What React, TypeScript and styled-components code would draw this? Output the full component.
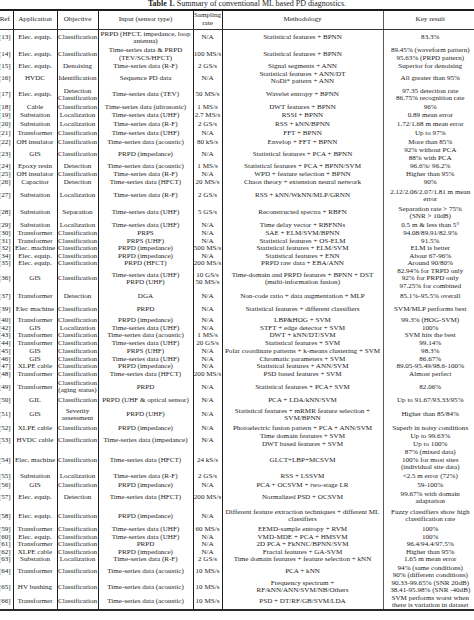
import React from 'react';
import styled, { createGlobalStyle } from 'styled-components';

const GlobalStyle = createGlobalStyle`
  html, body {
    margin: 0;
    padding: 0;
    background: #fff;
  }
  body {
    width: 474px;
    height: 620px;
    overflow: hidden;
  }
`;

const Page = styled.div`
  width: 474px;
  height: 620px;
  overflow: hidden;
  font-family: 'Liberation Serif', 'Times New Roman', serif;
  color: #1c1c1c;
`;

const Caption = styled.div`
  height: 10px;
  margin-top: -1px;
  padding-left: 20px;
  font-size: 8px;
  line-height: 9px;
  text-align: center;
  white-space: nowrap;
`;

const Table = styled.table`
  margin-left: -3px;
  width: 480px;
  table-layout: fixed;
  border-collapse: collapse;
  border-top: 2px solid #1c1c1c;
  border-bottom: 2.5px solid #2a2a2a;
  font-size: 7.1px;
  line-height: 7.4px;
`;

const Col = styled.col<{ $w: number }>`
  width: ${p => p.$w}px;
`;

const HeadRow = styled.tr`
  height: 19.3px;
`;

const Row = styled.tr<{ $h: number }>`
  height: ${p => p.$h}px;
`;

const HeadCell = styled.th<{ $first?: boolean; $soft?: boolean }>`
  padding: 0;
  font-weight: normal;
  vertical-align: middle;
  white-space: nowrap;
  border-bottom: 1px solid #333;
  border-left: ${p => (p.$first ? 'none' : `1px solid ${p.$soft ? '#5a5a5a' : '#1e1e1e'}`)};
`;

const Cell = styled.td<{ $first?: boolean; $soft?: boolean }>`
  padding: 0;
  vertical-align: middle;
  white-space: nowrap;
  border-left: ${p => (p.$first ? 'none' : `1px solid ${p.$soft ? '#5a5a5a' : '#1e1e1e'}`)};
`;

// flex column so that over-wide lines spill out evenly on both sides
const Lines = styled.div`
  display: flex;
  flex-direction: column;
  align-items: center;
`;

interface Entry {
  ref: string;
  app: string[];
  obj: string[];
  input: string[];
  rate: string[];
  meth: string[];
  key: string[];
  h: number;
}

const e = (
  ref: string,
  app: string,
  obj: string,
  input: string,
  rate: string,
  meth: string,
  key: string,
  h: number,
): Entry => ({
  ref,
  app: app.split('|'),
  obj: obj.split('|'),
  input: input.split('|'),
  rate: rate.split('|'),
  meth: meth.split('|'),
  key: key.split('|'),
  h,
});

const rows: Entry[] = [
  e('[13]', 'Elec. equip.', 'Classification', 'PRPD (HFCT, impedance, loop|antenna)', 'N/A', 'Statistical features + BPNN', '83.3%', 17.25),
  e('[14]', 'Elec. equip.', 'Classification', 'Time-series data & PRPD|(TEV/SCS/HFCT)', '100 MS/s', 'Statistical features + BPNN', '89.45% (waveform pattern)|95.63% (PRPD pattern)', 16.23),
  e('[15]', 'Elec. equip.', 'Denoising', 'Time-series data (R-F)', '2 GS/s', 'Signal segments + ANN', 'Superior for denoising', 7.25),
  e('[16]', 'HVDC', 'Identification', 'Sequence PD data', 'N/A', 'Statistical features + ANN/DT|NoDi* pattern + ANN', 'All greater than 95%', 16.62),
  e('[17]', 'Elec. equip.', 'Detection|Classification', 'Time-series data (TEV)', '50 MS/s', 'Wavelet entropy + BPNN', '97.35 detection rate|86.75% recognition rate', 16.63),
  e('[18]', 'Cable', 'Classification', 'Time-series data (ultrasonic)', '1 MS/s', 'DWT features + BPNN', '96%', 8.22),
  e('[19]', 'Substation', 'Localization', 'Time-series data (UHF)', '2.7 MS/s', 'RSSI + BPNN', '0.89 mean error', 8.95),
  e('[20]', 'Substation', 'Localization', 'Time-series data (R-F)', '2 GS/s', 'RSS + kNN/BPNN', '1.72/1.68 m mean error', 8.75),
  e('[21]', 'Transformer', 'Classification', 'Time-series data (UHF)', 'N/A', 'FFT + BPNN', 'Up to 97%', 8.75),
  e('[22]', 'OH insulator', 'Classification', 'Time-series data (acoustic)', '80 kS/s', 'Envelop + FFT + BPNN', 'More than 85%', 8.63),
  e('[23]', 'GIS', 'Classification', 'PRPD (impedance)', 'N/A', 'Statistical features + PCA + BPNN', '92% without PCA|88% with PCA', 16.25),
  e('[24]', 'Epoxy resin', 'Detection', 'Time-series data (acoustic)', '1 MS/s', 'Statistical features + PCA + BPNN/SVM', '96.6%/ 96.2%', 8.02),
  e('[25]', 'OH insulator', 'Classification', 'Time-series data (R-F)', 'N/A', 'WPD + feature selection + BPNN', 'Higher than 95%', 7.6),
  e('[26]', 'Capacitor', 'Detection', 'Time-series data (HFCT)', '20 MS/s', 'Chaos theory + extension neural network', '90%', 8.78),
  e('[27]', 'Substation', 'Localization', 'Time-series data (R-F)', '2 GS/s', 'RSS + kNN/WkNN/MLP/GRNN', '2.12/2.06/2.07/1.81 m mean|error', 17.27),
  e('[28]', 'Substation', 'Separation', 'Time-series data (UHF)', '5 GS/s', 'Reconstructed spectra + RBFN', 'Separation rate > 75%|(SNR > 10dB)', 17.23),
  e('[29]', 'Substation', 'Localization', 'Time-series data (UHF)', 'N/A', 'Time delay vector + RBFNNs', '0.5 m & less than 5°', 8.52),
  e('[30]', 'Transformer', 'Classification', 'PRPS', 'N/A', 'SAE + ELM/SVM/BPNN', '94.08/89.91/82.9%', 7.4),
  e('[31]', 'Transformer', 'Classification', 'PRPS (UHF)', 'N/A', 'Statistical features + OS-ELM', '91.5%', 7.35),
  e('[32]', 'Elec. machine', 'Classification', 'PRPD (impedance)', '500 MS/s', 'Statistical features + ELM/SVM', 'ELM is better', 7.0),
  e('[34]', 'Elec. equip.', 'Classification', 'PRPD (impedance)', 'N/A', 'Statistical features + ENN', 'About 67-96%', 7.0),
  e('[35]', 'Elec. equip.', 'Classification', 'PRPD (HFCT)', '200 MS/s', 'PRPD raw data + EBA/ANN', 'Around 90/80%', 7.65),
  e('[36]', 'GIS', 'Classification', 'Time-series data (UHF)|PRPD (UHF)', '10 GS/s|50 MS/s', 'Time-domain and PRPD features + BPNN + DST|(multi-information fusion)', '82.94% for TRPD only|92% for PRPD only|97.25% for combined', 22.95),
  e('[37]', 'Transformer', 'Detection', 'DGA', 'N/A', 'Non-code ratio + data augmentation + MLP', '85.1%-95.5% overall', 12.6),
  e('[39]', 'Elec machine', 'Classification', 'PRPD', 'N/A', 'Statistical features + different classifiers', 'SVM/MLP performs best', 13.25),
  e('[40]', 'Transformer', 'Classification', 'PRPD (impedance)', 'N/A', 'LBP&HOG + SVM', '99.3% (HOG-SVM)', 8.0),
  e('[42]', 'GIS', 'Localization', 'Time-series data (UHF)', 'N/A', 'STFT + edge detector + SVM', '100%', 7.85),
  e('[43]', 'Transformer', 'Classification', 'Time-series data (acoustic)', '1 MS/s', 'DWT + kNN/DT/SVM', 'SVM hits the best', 7.8),
  e('[44]', 'Transformer', 'Classification', 'Time-series data (UHF)', '20 GS/s', 'Statistical features + SVM', '99.14%', 7.65),
  e('[45]', 'GIS', 'Classification', 'PRPS (UHF)', 'N/A', 'Polar coordinate patterns + k-means clustering + SVM', '98.3%', 7.85),
  e('[46]', 'GIS', 'Classification', 'Time-series data (UHF)', 'N/A', 'Chromatic parameters + SVM', '86.67%', 7.85),
  e('[47]', 'XLPE cable', 'Classification', 'PRPD (impedance)', 'N/A', 'Statistical features + ANN/SVM', '89.05-95.49/98.6-100%', 7.65),
  e('[48]', 'Transformer', 'Classification', 'Time-series data (HFCT)', '200 MS/s', 'PSD based features + SVM', 'Almost perfect', 8.08),
  e('[49]', 'Transformer', 'Classification|(aging status)', 'PRPD', 'N/A', 'Statistical features + PCA+ SVM', '82.06%', 16.7),
  e('[50]', 'GIL', 'Classification', 'PRPD (UHF & optical sensor)', 'N/A', 'PCA + LDA/kNN/SVM', 'Up to 91.67/93.33/95%', 10.3),
  e('[51]', 'GIS', 'Severity|assessment', 'PRPD (UHF)', 'N/A', 'Statistical features + mRMR feature selection +|SVM/BPNN', 'Higher than 85/84%', 18.2),
  e('[52]', 'XLPE cable', 'Classification', 'PRPD (impedance)', 'N/A', 'Photoelectric fusion pattern + PCA + ANN/SVM', 'Superb in noisy conditions', 8.65),
  e('[53]', 'HVDC cable', 'Classification', 'Time-series data (impedance)', 'N/A', 'Time domain features + SVM|DWT based features + SVM', 'Up to 99.63%|Up to 100%', 15.5),
  e('[54]', 'Elec. machine', 'Classification', 'Time-series data (HFCT)', '24 kS/s', 'GLCT+LBP+MCSVM', '87% (mixed data)|100% for most sites|(individual site data)', 24.27),
  e('[55]', 'Substation', 'Localization', 'Time-series data (R-F)', '2 GS/s', 'RSS + LSSVM', '<2.5 m error (72%)', 8.8),
  e('[56]', 'GIS', 'Classification', 'PRPD (impedance)', 'N/A', 'PCA + OCSVM + two-stage LR', '59-100%', 7.83),
  e('[57]', 'Elec. equip.', 'Detection', 'Time-series data (HFCT)', '200 MS/s', 'Normalized PSD + OCSVM', '99.67% with domain|adaptation', 17.67),
  e('[58]', 'Elec. equip.', 'Classification', 'PRPD (impedance)', 'N/A', 'Different feature extraction techniques + different ML|classifiers', 'Fuzzy classifiers show high|classification rate', 18.68),
  e('[59]', 'Transformer', 'Classification', 'Time-series data (UHF)', '60 MS/s', 'EEMD-sample entropy + RVM', '100%', 8.07),
  e('[60]', 'Elec. equip.', 'Classification', 'Time-series data (UHF)', 'N/A', 'VMD-MDE + PCA + HMSVM', '100%', 6.75),
  e('[61]', 'Transformer', 'Classification', 'PRPD', 'N/A', '2D PCA + FkNNC/BPNN/SVM', '96.4/94.4/97.5%', 7.25),
  e('[62]', 'XLPE cable', 'Classification', 'PRPD (impedance)', 'N/A', 'Fractal features + GA-SVM', 'Higher than 95%', 7.5),
  e('[63]', 'Substation', 'Localization', 'Time-series data (R-F)', '2 GS/s', 'Time domain features + feature selection + kNN', '1.65 m mean error', 8.23),
  e('[64]', 'Transformer', 'Classification', 'Time-series data (acoustic)', '10 MS/s', 'PCA + kNN', '94% (same conditions)|90% (different conditions)', 15.67),
  e('[65]', 'HV bushing', 'Classification', 'Time-series data (acoustic)', '10 MS/s', 'Frequency spectrum +|RF/kNN/ANN/SVM/NB/Others', '90.33-99.65% (SNR 20dB)|38.41-95.98% (SNR -40dB)', 14.6),
  e('[66]', 'Transformer', 'Classification', 'Time-series data (acoustic)', '10 MS/s', 'PSD + DT/RF/GB/SVM/LDA', 'SVM performs worst when|there is variation in dataset', 15.75),
];

const widths = [16, 44, 41, 95, 29, 161, 94];

const LineStack: React.FC<{ lines: string[] }> = ({ lines }) => (
  <Lines>
    {lines.map((l, i) => (
      <span key={i}>{l}</span>
    ))}
  </Lines>
);

export default function App() {
  return (
    <Page>
      <GlobalStyle />
      <Caption>
        <b>Table 1.</b> Summary of conventional ML based PD diagnostics.
      </Caption>
      <Table>
        <colgroup>
          {widths.map((w, i) => (
            <Col key={i} $w={w} />
          ))}
        </colgroup>
        <thead>
          <HeadRow>
            <HeadCell $first>
              <LineStack lines={['Ref']} />
            </HeadCell>
            <HeadCell>
              <LineStack lines={['Application']} />
            </HeadCell>
            <HeadCell>
              <LineStack lines={['Objective']} />
            </HeadCell>
            <HeadCell>
              <LineStack lines={['Input (sensor type)']} />
            </HeadCell>
            <HeadCell>
              <LineStack lines={['Sampling', 'rate']} />
            </HeadCell>
            <HeadCell>
              <LineStack lines={['Methodology']} />
            </HeadCell>
            <HeadCell $soft>
              <LineStack lines={['Key result']} />
            </HeadCell>
          </HeadRow>
        </thead>
        <tbody>
          {rows.map(r => (
            <Row key={r.ref} $h={r.h}>
              <Cell $first>
                <LineStack lines={[r.ref]} />
              </Cell>
              <Cell>
                <LineStack lines={r.app} />
              </Cell>
              <Cell>
                <LineStack lines={r.obj} />
              </Cell>
              <Cell>
                <LineStack lines={r.input} />
              </Cell>
              <Cell>
                <LineStack lines={r.rate} />
              </Cell>
              <Cell>
                <LineStack lines={r.meth} />
              </Cell>
              <Cell $soft>
                <LineStack lines={r.key} />
              </Cell>
            </Row>
          ))}
        </tbody>
      </Table>
    </Page>
  );
}
